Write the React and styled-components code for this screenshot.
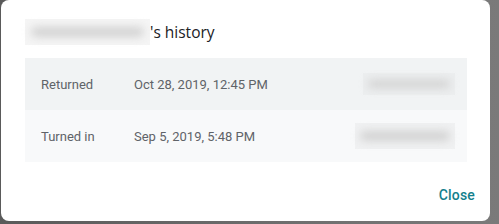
import styled, { createGlobalStyle } from 'styled-components'

const Global = createGlobalStyle`
  html, body { margin: 0; padding: 0; }
  body {
    background: linear-gradient(90deg, #5a5a5a 0%, #6f6f6f 60%, #7a7a7a 100%);
    width: 499px;
    height: 224px;
    overflow: hidden;
    font-family: Roboto, "Liberation Sans", sans-serif;
  }
`

const Backdrop = styled.div`
  padding: 0 9px 3px 1px;
`

const Dialog = styled.div`
  background: #fff;
  border-radius: 8px;
  height: 221px;
  box-sizing: border-box;
  padding: 19px 23px 0 24px;
  display: flex;
  flex-direction: column;
`

const Title = styled.h2`
  margin: 0;
  display: flex;
  align-items: center;
  height: 26px;
  font-family: "Open Sans", Roboto, sans-serif;
  font-weight: 400;
  font-size: 15.5px;
  color: #202124;
`

const Blur = styled.span`
  display: inline-flex;
  align-items: center;
  justify-content: center;
  width: ${p => p.$w}px;
  height: ${p => p.$h}px;
  background: ${p => p.$bg || '#f5f5f5'};
  &::after {
    content: '';
    width: 90%;
    height: 40%;
    border-radius: 6px;
    background: #d2d2d2;
    filter: blur(4px);
  }
`

const Table = styled.div`
  margin-top: 13px;
  display: flex;
  flex-direction: column;
`

const Row = styled.div`
  display: grid;
  grid-template-columns: 93px 1fr auto;
  align-items: center;
  height: 52px;
  padding: 0 12px 0 16px;
  background: ${p => (p.$alt ? '#f8f9fa' : '#f1f3f4')};
  font-size: 13px;
  color: #5f6368;
`

const Footer = styled.div`
  margin-top: auto;
  height: 57px;
  display: flex;
  justify-content: flex-end;
  align-items: flex-start;
`

const CloseButton = styled.button`
  border: none;
  background: none;
  padding: 0;
  margin: 23px -8px 0 0;
  font-family: Roboto, "Open Sans", sans-serif;
  font-weight: 500;
  font-size: 14px;
  letter-spacing: 0.2px;
  color: #137f8c;
  cursor: pointer;
`

export default function App() {
  return (
    <>
      <Global />
      <Backdrop>
        <Dialog>
          <Title>
            <Blur $w={125} $h={26} />
            's history
          </Title>
          <Table>
            <Row>
              <span>Returned</span>
              <span>Oct 28, 2019, 12:45 PM</span>
              <Blur $w={92} $h={22} $bg="#eceeef" />
            </Row>
            <Row $alt>
              <span>Turned in</span>
              <span>Sep 5, 2019, 5:48 PM</span>
              <Blur $w={100} $h={26} $bg="#f0f1f2" />
            </Row>
          </Table>
          <Footer>
            <CloseButton>Close</CloseButton>
          </Footer>
        </Dialog>
      </Backdrop>
    </>
  )
}
